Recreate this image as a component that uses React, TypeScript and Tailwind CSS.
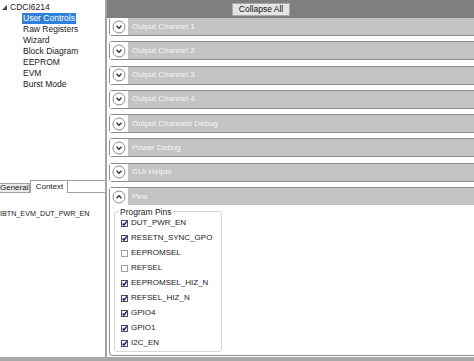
import { Fragment } from "react";

const sections = [
  "Output Channel 1",
  "Output Channel 2",
  "Output Channel 3",
  "Output Channel 4",
  "Output Channels Debug",
  "Power Debug",
  "GUI Helper",
];

const pins: [string, boolean][] = [
  ["DUT_PWR_EN", true],
  ["RESETN_SYNC_GPO", true],
  ["EEPROMSEL", false],
  ["REFSEL", false],
  ["EEPROMSEL_HIZ_N", true],
  ["REFSEL_HIZ_N", true],
  ["GPIO4", true],
  ["GPIO1", true],
  ["I2C_EN", true],
];

const treeItems = ["User Controls", "Raw Registers", "Wizard", "Block Diagram", "EEPROM", "EVM", "Burst Mode"];

function ChevronCircle({ up = false }: { up?: boolean }) {
  return (
    <svg width="14" height="14" viewBox="0 0 14 14">
      <circle cx="7" cy="7" r="6" fill="#fff" stroke="#8a8a8a" strokeWidth="1" />
      <path
        d={up ? "M4.5 8.2 L7 5.7 L9.5 8.2" : "M4.5 5.8 L7 8.3 L9.5 5.8"}
        fill="none"
        stroke="#333"
        strokeWidth="1.4"
      />
    </svg>
  );
}

function Check({ on }: { on: boolean }) {
  return (
    <svg width="7" height="7" viewBox="0 0 7 7" className="shrink-0">
      <rect x="0.5" y="0.5" width="6" height="6" fill="#fff" stroke={on ? "#4a4a6a" : "#a0a0a0"} strokeWidth="1" />
      {on && <path d="M1.6 3.6 L3 5 L5.8 1.4" fill="none" stroke="#1c1c80" strokeWidth="1.5" />}
    </svg>
  );
}

function SectionHeader({ title, up }: { title: string; up?: boolean }) {
  return (
    <div className="flex h-[17px]">
      <div className="flex w-[18px] shrink-0 items-center justify-center bg-white">
        <ChevronCircle up={up} />
      </div>
      <div className="flex flex-1 items-center bg-[#c3c3c3] pl-[4px] text-[8px] text-[#f6f6f6]">{title}</div>
    </div>
  );
}

export default function App() {
  return (
    <div className="flex h-[361px] w-[474px] flex-col overflow-hidden bg-white font-['Liberation_Sans',Arial,sans-serif] text-[#1a1a1a]">
      <div className="flex min-h-0 flex-1">
        {/* left navigation */}
        <aside className="flex w-[105px] shrink-0 flex-col">
          <div className="h-[180px] pt-[2px] text-[8.5px]">
            <div className="flex h-[11px] items-center">
              <svg width="10" height="11" viewBox="0 0 10 11" className="shrink-0">
                <polygon points="7,3 7,8 2,8" fill="#444" />
              </svg>
              <span>CDCI6214</span>
            </div>
            {treeItems.map((t, i) => (
              <div key={t} className="flex h-[11px] items-stretch pl-[22px]">
                <span
                  className={`flex items-center px-[1px] ${i === 0 ? "bg-[#2f7fdc] text-white" : ""}`}
                >
                  {t}
                </span>
              </div>
            ))}
          </div>
          <div className="flex h-[13px] items-end text-[8px]">
            <div className="flex h-[10px] items-center border-y border-r border-[#a0a0a0] bg-[#e8e8e8] pr-[1px] pl-0">
              General
            </div>
            <div className="flex h-[13px] w-[38px] items-center justify-center border-x border-t border-[#a0a0a0] bg-white">
              Context
            </div>
            <div className="h-[13px] flex-1 border-y border-[#a0a0a0]" />
          </div>
          <div className="mt-[16px] text-[7.2px] leading-[10px]">IBTN_EVM_DUT_PWR_EN</div>
        </aside>

        <div className="w-[2px] shrink-0 bg-[#a3a3a3]" />

        {/* right panel */}
        <main className="flex min-w-0 flex-1 flex-col">
          <div className="flex h-[18px] shrink-0 items-center bg-[#7f7f7f] pl-[125px]">
            <button className="flex h-[13px] w-[58px] items-center justify-center border border-[#a8a8a8] bg-[#e4e4e4] text-[8.5px] text-[#111]">
              Collapse All
            </button>
          </div>
          <div className="min-h-0 flex-1 overflow-hidden pl-[2px]">
            <div className="-mt-[1px] flex w-[400px] flex-col gap-[5.3px]">
              {sections.map((s) => (
                <div key={s} className="rounded-[3px] border border-[#8c8c8c]">
                  <SectionHeader title={s} />
                </div>
              ))}
              <div className="rounded-[3px] border border-[#8c8c8c] pb-[3px]">
                <SectionHeader title="Pins" up />
                <fieldset className="mt-[2.5px] ml-[4px] w-[108px] rounded-[3px] border border-[#d8d8d8] pl-[6px]">
                  <legend className="-ml-[2px] px-[1px] text-[8.5px] leading-[8px]">Program Pins</legend>
                  {pins.map(([name, on]) => (
                    <Fragment key={name}>
                      <div className="flex h-[15px] items-center gap-[2px] text-[8px] text-[#222]">
                        <Check on={on} />
                        <span className="ml-[1px]">{name}</span>
                      </div>
                    </Fragment>
                  ))}
                </fieldset>
              </div>
            </div>
          </div>
        </main>
      </div>
      <div className="h-[4px] shrink-0 bg-[#a8a8a8]" />
    </div>
  );
}
